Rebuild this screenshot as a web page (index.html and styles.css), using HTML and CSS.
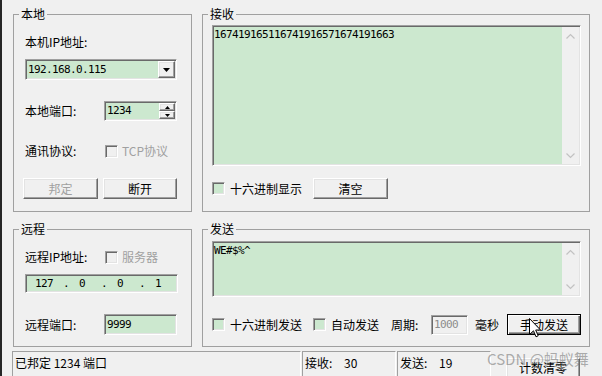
FILE: index.html
```html
<!DOCTYPE html>
<html lang="zh-CN">

<head>
    <meta charset="UTF-8">
    <meta name="viewport" content="width=device-width, initial-scale=1.0">
    <title>UDP调试助手</title>
    <link rel="stylesheet" href="styles.css">
</head>

<body>
    <div class="window">
        <div class="panels">
            <!-- 本地 -->
            <fieldset class="group">
                <legend class="group__title">本地</legend>
                <div class="group__body group__body--left">
                    <div class="label label--first">本机IP地址:</div>
                    <div class="combo sunken">
                        <span class="combo__value mono">192.168.0.115</span>
                        <span class="combo__btn raised">
                            <svg width="7" height="4" viewBox="0 0 7 4"><path d="M0 0h7L3.5 4z" fill="#000"/></svg>
                        </span>
                    </div>
                    <div class="line line--port">
                        <span class="label label--col">本地端口:</span>
                        <div class="edit edit--spin sunken">
                            <span class="edit__value mono">1234</span>
                            <span class="spin">
                                <span class="spin__btn raised"><svg width="5" height="3" viewBox="0 0 5 3"><path d="M0 3h5L2.5 0z" fill="#000"/></svg></span>
                                <span class="spin__btn raised"><svg width="5" height="3" viewBox="0 0 5 3"><path d="M0 0h5L2.5 3z" fill="#000"/></svg></span>
                            </span>
                        </div>
                    </div>
                    <div class="line line--proto">
                        <span class="label label--col">通讯协议:</span>
                        <span class="check sunken"></span>
                        <span class="check-label is-disabled">TCP协议</span>
                    </div>
                    <div class="buttons">
                        <button type="button" class="btn raised btn--bind is-disabled">邦定</button>
                        <button type="button" class="btn raised btn--open">断开</button>
                    </div>
                </div>
            </fieldset>

            <!-- 接收 -->
            <fieldset class="group">
                <legend class="group__title">接收</legend>
                <div class="group__body group__body--right">
                    <div class="memo memo--recv sunken">
                        <div class="memo__text mono">167419165116741916571674191663</div>
                        <div class="scroll">
                            <span class="scroll__arrow"><svg width="9" height="6" viewBox="0 0 9 6"><path d="M0.5 5.5L4.5 1.5L8.5 5.5" fill="none" stroke="#c2c2c2" stroke-width="1.2"/></svg></span>
                            <span class="scroll__arrow"><svg width="9" height="6" viewBox="0 0 9 6"><path d="M0.5 0.5L4.5 4.5L8.5 0.5" fill="none" stroke="#c2c2c2" stroke-width="1.2"/></svg></span>
                        </div>
                    </div>
                    <div class="line line--recv">
                        <span class="check check--on sunken"></span>
                        <span class="check-label">十六进制显示</span>
                        <button type="button" class="btn raised btn--clear">清空</button>
                    </div>
                </div>
            </fieldset>

            <!-- 远程 -->
            <fieldset class="group">
                <legend class="group__title">远程</legend>
                <div class="group__body group__body--left">
                    <div class="line line--remote">
                        <span class="label label--col">远程IP地址:</span>
                        <span class="check sunken"></span>
                        <span class="check-label is-disabled">服务器</span>
                    </div>
                    <div class="ipbox sunken mono">
                        <span class="ipbox__part">127</span><span class="ipbox__dot">.</span>
                        <span class="ipbox__part">0</span><span class="ipbox__dot">.</span>
                        <span class="ipbox__part">0</span><span class="ipbox__dot">.</span>
                        <span class="ipbox__part">1</span>
                    </div>
                    <div class="line line--remote-port">
                        <span class="label label--col">远程端口:</span>
                        <div class="edit edit--port sunken"><span class="edit__value mono">9999</span></div>
                    </div>
                </div>
            </fieldset>

            <!-- 发送 -->
            <fieldset class="group">
                <legend class="group__title">发送</legend>
                <div class="group__body group__body--right">
                    <div class="memo memo--send sunken">
                        <div class="memo__text mono">WE#$%^</div>
                        <div class="scroll">
                            <span class="scroll__arrow"><svg width="9" height="6" viewBox="0 0 9 6"><path d="M0.5 5.5L4.5 1.5L8.5 5.5" fill="none" stroke="#c2c2c2" stroke-width="1.2"/></svg></span>
                            <span class="scroll__arrow"><svg width="9" height="6" viewBox="0 0 9 6"><path d="M0.5 0.5L4.5 4.5L8.5 0.5" fill="none" stroke="#c2c2c2" stroke-width="1.2"/></svg></span>
                        </div>
                    </div>
                    <div class="line line--send">
                        <span class="check check--on sunken"></span>
                        <span class="check-label">十六进制发送</span>
                        <span class="check check--on check--auto sunken"></span>
                        <span class="check-label">自动发送</span>
                        <span class="label label--period">周期:</span>
                        <div class="edit edit--period sunken"><span class="edit__value mono">1000</span></div>
                        <span class="label label--unit">毫秒</span>
                        <button type="button" class="btn btn--default">手动发送</button>
                    </div>
                </div>
            </fieldset>
        </div>

        <div class="status">
            <div class="status__cell status__cell--msg">已邦定 1234 端口</div>
            <div class="status__cell"><span class="status__key">接收:</span>30</div>
            <div class="status__cell"><span class="status__key">发送:</span>19</div>
            <button type="button" class="btn raised status__btn">计数清零</button>
        </div>
    </div>

    <div class="watermark">CSDN @蚂蚁舞</div>
    <svg class="cursor" width="13" height="20" viewBox="0 0 13 20">
        <path d="M0.5 0.5L0.5 16.5L4.5 12.8L7 18.8L9.2 17.8L6.7 12L11.5 12Z" fill="#fff" stroke="#000" stroke-linejoin="round"/>
    </svg>
</body>

</html>
```

FILE: styles.css
```css
* {
    box-sizing: border-box;
}

body {
    position: relative;
    width: 602px;
    height: 376px;
    margin: 0;
    overflow: hidden;
    background: #f0f0f0;
    color: #000;
    font-family: "Noto Sans CJK SC", sans-serif;
    font-size: 12px;
    line-height: 14px;
}

.window {
    height: 376px;
    border-left: 2px solid #262626;
    padding: 7px 0 0 11px;
}

.panels {
    display: grid;
    grid-template-columns: 179px 388px;
    grid-template-rows: 205px 125px;
    gap: 10px;
}

/* group boxes */
.group {
    margin: 0;
    padding: 0;
    min-width: 0;
    border: 1px solid #a0a0a0;
}

.group__title {
    margin-left: 5px;
    padding: 0 2px;
    line-height: 14px;
}

.group__body--left {
    padding-left: 11px;
}

.group__body--right {
    padding-left: 9px;
}

.mono {
    font-family: "DejaVu Sans Mono", monospace;
    font-size: 11px;
    letter-spacing: -0.62px;
}

/* 3d borders */
.sunken {
    border: 1px solid;
    border-color: #a0a0a0 #fff #fff #a0a0a0;
    box-shadow: inset 1px 1px #696969, inset -1px -1px #e3e3e3;
}

.raised {
    border: 1px solid;
    border-color: #fff #696969 #696969 #fff;
    box-shadow: inset -1px -1px #a0a0a0, inset 1px 1px #e3e3e3;
    background: #f0f0f0;
}

.label {
    flex: none;
    white-space: nowrap;
}

.label--first {
    margin-top: 14px;
}

.label--col {
    width: 79px;
}

.line {
    display: flex;
    align-items: center;
}

.is-disabled {
    color: #a0a0a0;
}

/* combo box */
.combo {
    display: flex;
    align-items: center;
    width: 152px;
    height: 21px;
    margin-top: 10px;
    padding: 1px;
    background: #cce8cf;
}

.combo__value {
    flex: 1;
    padding-left: 1px;
}

.combo__btn {
    display: flex;
    align-items: center;
    justify-content: center;
    width: 17px;
    height: 17px;
}

/* edits */
.edit {
    display: flex;
    align-items: center;
    height: 20px;
    padding: 1px;
    background: #cce8cf;
}

.edit__value {
    flex: 1;
    padding-left: 1px;
}

.edit--spin {
    width: 73px;
}

.edit--port {
    width: 73px;
    height: 21px;
}

.edit--period {
    width: 37px;
    height: 20px;
    background: #f0f0f0;
    color: #8c8c8c;
}

.spin {
    display: flex;
    flex-direction: column;
    width: 16px;
    height: 16px;
}

.spin__btn {
    display: flex;
    flex: 1;
    align-items: center;
    justify-content: center;
}

/* checkboxes */
.check {
    flex: none;
    width: 13px;
    height: 13px;
    background: #f0f0f0;
}

.check--on {
    background: #cce8cf;
}

.check--auto {
    margin-left: 11px;
}

.check-label {
    flex: none;
    margin-left: 5px;
    white-space: nowrap;
}

.line--port {
    height: 20px;
    margin-top: 21px;
}

.line--proto {
    height: 20px;
    margin-top: 20px;
}

.line--proto .check,
.line--remote .check {
    margin-left: 1px;
}

.line--proto .check-label,
.line--remote .check-label {
    margin-left: 4px;
}

/* buttons */
.btn {
    height: 21px;
    margin: 0;
    padding: 0;
    color: #000;
    font: inherit;
}

.btn.is-disabled {
    color: #a0a0a0;
}

.buttons {
    display: flex;
    gap: 5px;
    margin: 17px 0 0 -2px;
}

.btn--bind {
    width: 75px;
}

.btn--open {
    width: 74px;
}

.btn--clear {
    width: 75px;
    margin-left: 11px;
}

.btn--default {
    width: 74px;
    margin-left: 8px;
    border: 1px solid #000;
    background: #f0f0f0;
    box-shadow: inset 1px 1px #fff, inset -1px -1px #696969, inset -2px -2px #a0a0a0;
}

/* memo boxes */
.memo {
    display: flex;
    width: 369px;
    padding: 1px;
    background: #cce8cf;
}

.memo--recv {
    height: 141px;
    margin-top: 4px;
}

.memo--send {
    height: 56px;
    margin-top: 5px;
}

.memo__text {
    flex: 1;
    padding-top: 1px;
    line-height: 13px;
}

.scroll {
    display: flex;
    flex-direction: column;
    justify-content: space-between;
    width: 17px;
    background: #f0f0f0;
}

.scroll__arrow {
    display: flex;
    align-items: center;
    justify-content: center;
    height: 17px;
}

.line--recv {
    height: 21px;
    margin-top: 12px;
}

/* remote */
.line--remote {
    height: 14px;
    margin-top: 14px;
}

.ipbox {
    display: flex;
    align-items: center;
    width: 153px;
    height: 19px;
    margin-top: 10px;
    padding-left: 2px;
    background: #cce8cf;
}

.ipbox__part {
    width: 32px;
    text-align: center;
}

.ipbox__dot {
    width: 6px;
    padding-left: 3px;
}

.line--remote-port {
    height: 21px;
    margin-top: 21px;
}

/* send row */
.line--send {
    height: 21px;
    margin-top: 17px;
}

.label--period {
    width: 40px;
    margin-left: 12px;
}

.label--unit {
    margin-left: 7px;
}

/* status bar */
.status {
    display: flex;
    align-items: flex-start;
    margin: 4px 0 0 -1px;
}

.status__cell {
    width: 94px;
    height: 30px;
    margin-right: 1px;
    padding: 3px 0 0 2px;
    border: 1px solid;
    border-color: #a0a0a0 #fff #fff #a0a0a0;
    line-height: 16px;
    white-space: nowrap;
}

.status__cell--msg {
    width: 289px;
}

.status__key {
    display: inline-block;
    width: 39px;
}

.status__btn {
    width: 74px;
    height: 23px;
    margin: 7px 0 0 14px;
    padding-bottom: 3px;
}

/* overlays */
.watermark {
    position: absolute;
    left: 487px;
    top: 349px;
    color: rgba(110, 110, 110, 0.55);
    font-size: 15px;
    line-height: 20px;
    white-space: nowrap;
    pointer-events: none;
}

.cursor {
    position: absolute;
    left: 529px;
    top: 318px;
}
```
